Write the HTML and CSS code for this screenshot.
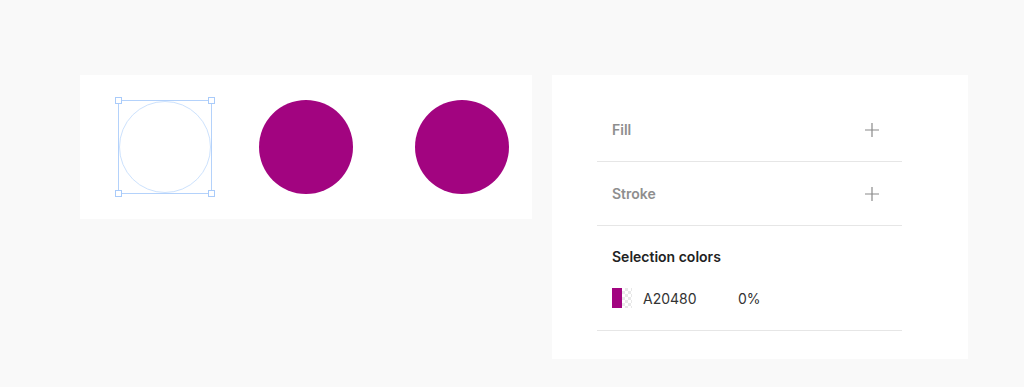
FILE: index.html
```html
<!DOCTYPE html>
<html lang="en">
<head>
    <meta charset="UTF-8">
    <meta name="viewport" content="width=device-width, initial-scale=1.0">
    <title>Selection colors</title>
    <link rel="stylesheet" href="styles.css">
</head>
<body>
    <div class="stage">
        <div class="canvas">
            <div class="shape selected">
                <div class="outline"></div>
                <span class="handle tl"></span>
                <span class="handle tr"></span>
                <span class="handle bl"></span>
                <span class="handle br"></span>
            </div>
            <div class="shape dot second"></div>
            <div class="shape dot third"></div>
        </div>
        <div class="panel">
            <div class="section row">
                <span class="section-title">Fill</span>
                <svg class="plus" width="14" height="14" viewBox="0 0 14 14"><path d="M7 0v14M0 7h14" stroke="#8a8a8a" stroke-width="1.2" fill="none"/></svg>
            </div>
            <div class="section row">
                <span class="section-title">Stroke</span>
                <svg class="plus" width="14" height="14" viewBox="0 0 14 14"><path d="M7 0v14M0 7h14" stroke="#8a8a8a" stroke-width="1.2" fill="none"/></svg>
            </div>
            <div class="section colors">
                <div class="colors-title">Selection colors</div>
                <div class="color-row">
                    <span class="swatch"><span class="swatch-fill"></span><span class="swatch-alpha"></span></span>
                    <span class="hex">A20480</span>
                    <span class="opacity">0%</span>
                </div>
            </div>
        </div>
    </div>
</body>
</html>
```

FILE: styles.css
```css
body {
    margin: 0;
    background-color: #f9f9f9;
    font-family: Inter, "Noto Sans", sans-serif;
}
.stage {
    display: flex;
    align-items: flex-start;
    gap: 20px;
    padding: 75px 0 0 80px;
}
.canvas {
    width: 452px;
    height: 144px;
    box-sizing: border-box;
    padding: 25px 0 25px 38px;
    background-color: #fff;
    display: flex;
}
.shape {
    width: 94px;
    height: 94px;
    flex-shrink: 0;
}
.selected {
    position: relative;
    box-sizing: border-box;
    border: 1px solid #b4d2fb;
}
.outline {
    width: 100%;
    height: 100%;
    box-sizing: border-box;
    border: 1px solid #cde2fd;
    border-radius: 50%;
}
.handle {
    position: absolute;
    width: 5px;
    height: 5px;
    background: #fff;
    border: 1px solid #a9cbfa;
}
.tl { top: -4px; left: -4px; }
.tr { top: -4px; right: -4px; }
.bl { bottom: -4px; left: -4px; }
.br { bottom: -4px; right: -4px; }
.dot {
    border-radius: 50%;
    background-color: #a20480;
}
.second {
    margin-left: 47px;
}
.third {
    margin-left: 62px;
}
.panel {
    width: 416px;
    height: 284px;
    box-sizing: border-box;
    padding: 23px 66px 0 45px;
    background-color: #fff;
}
.section {
    border-bottom: 1px solid #e6e6e6;
}
.row {
    height: 64px;
    box-sizing: border-box;
    display: flex;
    align-items: center;
    justify-content: space-between;
    padding: 0 23px 0 15px;
}
.section-title {
    font-size: 14px;
    font-weight: 600;
    color: #8e8e8e;
}
.plus {
    display: block;
}
.colors {
    padding: 21px 15px 22px;
}
.colors-title {
    font-size: 14px;
    font-weight: 600;
    color: #222;
    line-height: 20px;
}
.color-row {
    display: flex;
    align-items: center;
    margin-top: 21px;
    height: 20px;
    font-size: 14px;
    color: #333;
}
.swatch {
    display: flex;
    width: 20px;
    height: 20px;
}
.swatch-fill {
    width: 10px;
    background-color: #a20480;
}
.swatch-alpha {
    width: 10px;
    background-color: #fff;
    background-image: linear-gradient(45deg, #e8e8e8 25%, transparent 25%, transparent 75%, #e8e8e8 75%),
        linear-gradient(45deg, #e8e8e8 25%, transparent 25%, transparent 75%, #e8e8e8 75%);
    background-size: 6px 6px;
    background-position: 0 0, 3px 3px;
}
.hex {
    margin-left: 11px;
    width: 95px;
}
```
